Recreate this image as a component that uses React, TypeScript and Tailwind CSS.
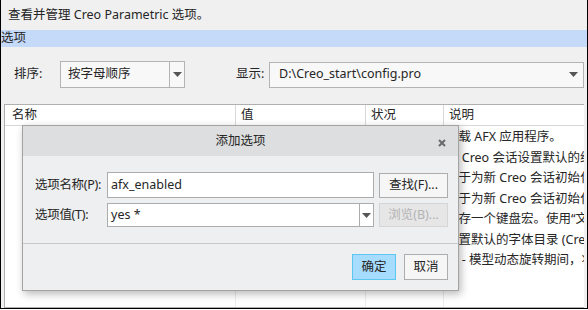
import React from "react";

const font = "font-['Noto_Sans','Noto_Sans_CJK_SC',sans-serif]";

function Caret() {
    return (
        <svg width="9" height="5" viewBox="0 0 9 5">
            <path d="M0 0H9L4.5 5Z" fill="#555" />
        </svg>
    );
}

const descs = [
    "加载 AFX 应用程序。",
    "为 Creo 会话设置默认的纸张大小",
    "用于为新 Creo 会话初始化设置",
    "用于为新 Creo 会话初始化设置",
    "保存一个键盘宏。使用“文件”",
    "设置默认的字体目录 (Creo",
    "是 - 模型动态旋转期间，将",
];

function App() {
    return (
        <div className={`relative flex h-[309px] w-[588px] flex-col border-x border-b border-black bg-[#f0f0f1] text-[12.5px] text-[#262626] ${font}`}>
            <div className="flex h-[30px] items-center pl-[7px]">查看并管理 Creo Parametric 选项。</div>
            <div className="flex h-[17px] items-center bg-[#c5d9f8] leading-none">选项</div>

            <div className="mt-[14px] flex h-[27px] items-center">
                <span className="ml-[13px] w-[46px]">排序:</span>
                <div className="flex h-[27px] w-[125px] border border-[#b4b4b4] bg-[#f8f8f8]">
                    <span className="flex flex-1 items-center pl-[7px]">按字母顺序</span>
                    <span className="flex w-[15px] items-center justify-center border-l border-[#b4b4b4]">
                        <Caret />
                    </span>
                </div>
                <span className="ml-[51px] w-[33px]">显示:</span>
                <div className="flex h-[26px] w-[315px] items-center justify-between border border-[#b4b4b4] bg-[#f8f8f8] pl-[9px] pr-[5px]">
                    <span>D:\Creo_start\config.pro</span>
                    <Caret />
                </div>
            </div>

            <div className="mx-[3px] mt-[16px] flex flex-1 flex-col overflow-hidden border border-r-0 border-[#b0b0b0] bg-white">
                <div className="flex h-[21px] items-center border-b border-[#d8d8d8]">
                    <div className="flex h-full w-[231px] items-center border-r border-[#d8d8d8] pl-[7px]">名称</div>
                    <div className="flex h-full w-[130px] items-center border-r border-[#d8d8d8] pl-[5px]">值</div>
                    <div className="flex h-full w-[78px] items-center border-r border-[#d8d8d8] pl-[5px]">状况</div>
                    <div className="flex h-full flex-1 items-center pl-[5px]">说明</div>
                </div>
                <div className="flex flex-1">
                    <div className="w-[231px] border-r border-[#ececec]" />
                    <div className="w-[130px] border-r border-[#ececec]" />
                    <div className="w-[78px] border-r border-[#ececec]" />
                    <div className="min-w-0 flex-1 overflow-hidden pt-[1px]">
                        {descs.map((d, i) => (
                            <div key={i} className="h-[20.5px] whitespace-nowrap pl-[2px] leading-[20.5px]">
                                {d}
                            </div>
                        ))}
                    </div>
                </div>
            </div>

            {/* 添加选项 dialog */}
            <div className="absolute left-[21px] top-[125px] flex h-[166px] w-[437px] flex-col border border-[#a3a3a3] bg-[#eeeff0] shadow-[2px_3px_8px_rgba(0,0,0,0.28)]">
                <div className="relative flex h-[30px] items-center justify-center bg-[#dcdedf]">
                    <span>添加选项</span>
                    <svg className="absolute right-[12px] top-[13px]" width="8" height="8" viewBox="0 0 8 8">
                        <path d="M1 1L7 7M7 1L1 7" stroke="#6a6a6a" strokeWidth="2" />
                    </svg>
                </div>
                <div className="mt-[16px] flex h-[26px] items-center">
                    <span className="ml-[12px] w-[72px] whitespace-nowrap tracking-[-0.3px]">选项名称(P):</span>
                    <div className="flex h-[26px] w-[267px] items-center border border-[#acacac] bg-white pl-[3px]">afx_enabled</div>
                    <div className="ml-[5px] flex h-[25px] w-[69px] items-center justify-center whitespace-nowrap border border-[#adadad] bg-[#f6f6f6]">查找(F)...</div>
                </div>
                <div className="mt-[5px] flex h-[24px] items-center">
                    <span className="ml-[12px] w-[72px] whitespace-nowrap tracking-[-0.3px]">选项值(T):</span>
                    <div className="flex h-[24px] w-[267px] border border-[#acacac] bg-white">
                        <span className="flex flex-1 items-center pl-[3px]">yes *</span>
                        <span className="flex w-[14px] items-center justify-center border-l border-[#acacac]">
                            <Caret />
                        </span>
                    </div>
                    <div className="ml-[5px] flex h-[24px] w-[69px] items-center justify-center whitespace-nowrap border border-[#d6d6d6] bg-[#e6e6e7] text-[#b3b3b3]">浏览(B)...</div>
                </div>
                <div className="mt-[16px] border-t border-[#c8c8c8]" />
                <div className="mt-[10px] flex justify-end gap-[8px] pr-[10px]">
                    <div className="flex h-[26px] w-[44px] items-center justify-center border border-[#5ec6f5] bg-[#a6dcfe]">确定</div>
                    <div className="flex h-[26px] w-[44px] items-center justify-center border border-[#adadad] bg-[#f6f6f6]">取消</div>
                </div>
            </div>
        </div>
    );
}

export default App;
